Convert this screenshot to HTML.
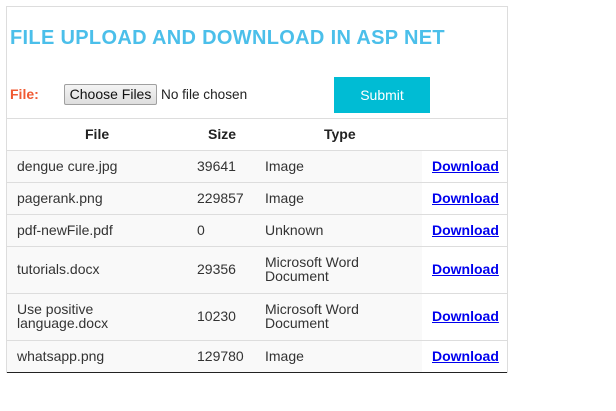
<!DOCTYPE html>
<html><head><style>
body{margin:0;background:#fff;font-family:"Liberation Sans",Arial,sans-serif;}
#box{position:absolute;left:6px;top:6px;width:500px;height:366px;border:1px solid #ddd;border-bottom:none;}
.a{position:absolute;white-space:nowrap;}
h1{position:absolute;left:10px;top:27px;margin:0;font-size:20px;letter-spacing:0.32px;font-weight:bold;color:#4bbfea;white-space:nowrap;}
.row{position:absolute;left:7px;width:500px;border-top:1px solid #ddd;}
.g{position:absolute;left:0;top:0;bottom:0;width:415px;background:#f9f9f9;}
.c{position:absolute;font-size:14px;color:#333;line-height:16px;}
.d{position:absolute;left:425px;font-size:14px;font-weight:bold;color:#0000ee;text-decoration:underline;}
</style></head><body>
<div id="box"></div>
<h1>FILE UPLOAD AND DOWNLOAD IN ASP NET</h1>
<div class="a" style="left:10px;top:86px;font-size:14px;font-weight:bold;color:#f05a32;">File:</div>
<div class="a" style="left:64px;top:84px;width:91px;height:19px;border:1px solid #a0a0a0;border-radius:2px;background:linear-gradient(#f4f4f4,#dedede);font-size:14px;line-height:19px;text-align:center;color:#111;">Choose Files</div>
<div class="a" style="left:161px;top:87px;font-size:13.6px;color:#222;">No file chosen</div>
<div class="a" style="left:334px;top:77px;width:96px;height:36px;background:#00bcd4;color:#fff;font-size:14px;line-height:36px;text-align:center;">Submit</div>

<div class="row" style="top:118px;height:32px;">
<div class="c" style="left:78px;top:7px;font-weight:bold;color:#222;">File</div>
<div class="c" style="left:201px;top:7px;font-weight:bold;color:#222;">Size</div>
<div class="c" style="left:317px;top:7px;font-weight:bold;color:#222;">Type</div>
</div>
<div class="row" style="top:150px;height:31px;"><div class="g"></div>
<div class="c" style="left:10px;top:7px;">dengue cure.jpg</div><div class="c" style="left:190px;top:7px;">39641</div><div class="c" style="left:258px;top:7px;">Image</div><div class="d" style="top:7px;">Download</div></div>
<div class="row" style="top:182px;height:31px;"><div class="g"></div>
<div class="c" style="left:10px;top:7px;">pagerank.png</div><div class="c" style="left:190px;top:7px;">229857</div><div class="c" style="left:258px;top:7px;">Image</div><div class="d" style="top:7px;">Download</div></div>
<div class="row" style="top:214px;height:31px;"><div class="g"></div>
<div class="c" style="left:10px;top:7px;">pdf-newFile.pdf</div><div class="c" style="left:190px;top:7px;">0</div><div class="c" style="left:258px;top:7px;">Unknown</div><div class="d" style="top:7px;">Download</div></div>
<div class="row" style="top:246px;height:46px;"><div class="g"></div>
<div class="c" style="left:10px;top:14px;">tutorials.docx</div><div class="c" style="left:190px;top:14px;">29356</div><div class="c" style="left:258px;top:8px;line-height:14px;">Microsoft Word<br>Document</div><div class="d" style="top:14px;">Download</div></div>
<div class="row" style="top:293px;height:46px;"><div class="g"></div>
<div class="c" style="left:10px;top:8px;line-height:14px;">Use positive<br>language.docx</div><div class="c" style="left:190px;top:14px;">10230</div><div class="c" style="left:258px;top:8px;line-height:14px;">Microsoft Word<br>Document</div><div class="d" style="top:14px;">Download</div></div>
<div class="row" style="top:340px;height:31px;border-bottom:1px solid #222;"><div class="g"></div>
<div class="c" style="left:10px;top:7px;">whatsapp.png</div><div class="c" style="left:190px;top:7px;">129780</div><div class="c" style="left:258px;top:7px;">Image</div><div class="d" style="top:7px;">Download</div></div>
</body></html>
